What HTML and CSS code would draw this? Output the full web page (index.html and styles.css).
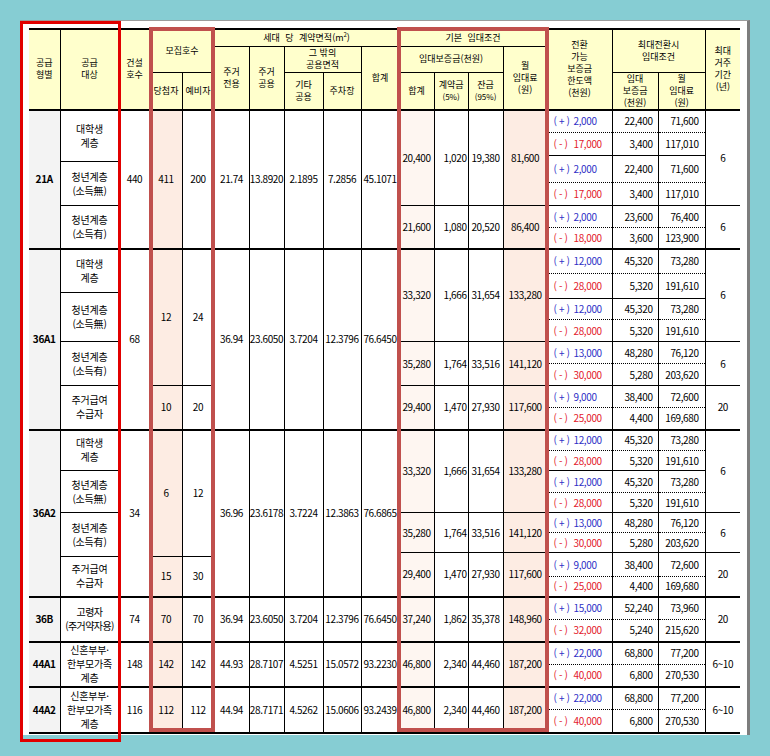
FILE: index.html
```html
<!DOCTYPE html>
<html lang="ko">
<head>
<meta charset="utf-8">
<title>공급 조건표</title>
<link rel="stylesheet" href="styles.css">
</head>
<body>
<div class="page">
  <div class="panel">
    <table class="t">
      <colgroup>
        <col class="c1"><col class="c2"><col class="c3"><col class="c4"><col class="c5">
        <col class="c6"><col class="c7"><col class="c8"><col class="c9"><col class="c10">
        <col class="c11"><col class="c12"><col class="c13"><col class="c14"><col class="c15">
        <col class="c16"><col class="c17"><col class="c18">
      </colgroup>
      <thead>
        <tr class="h17">
          <th rowspan="3">공급<br>형별</th>
          <th rowspan="3">공급<br>대상</th>
          <th rowspan="3">건설<br>호수</th>
          <th rowspan="2" colspan="2">모집호수</th>
          <th colspan="5" class="ws">세대 당 계약면적(m<span class="sup">2</span>)</th>
          <th colspan="4" class="ws">기본 임대조건</th>
          <th rowspan="3">전환<br>가능<br>보증금<br>한도액<br>(천원)</th>
          <th rowspan="2" colspan="2">최대전환시<br>임대조건</th>
          <th rowspan="3" class="last">최대<br>거주<br>기간<br>(년)</th>
        </tr>
        <tr class="h26">
          <th rowspan="2">주거<br>전용</th>
          <th rowspan="2">주거<br>공용</th>
          <th colspan="2">그 밖의<br>공용면적</th>
          <th rowspan="2">합계</th>
          <th colspan="3">임대보증금(천원)</th>
          <th rowspan="2">월<br>임대료<br>(원)</th>
        </tr>
        <tr class="h37">
          <th>당첨자</th>
          <th>예비자</th>
          <th>기타<br>공용</th>
          <th>주차장</th>
          <th>합계</th>
          <th>계약금<br><span class="sm">(5%)</span></th>
          <th>잔금<br><span class="sm">(95%)</span></th>
          <th>임대<br>보증금<br>(천원)</th>
          <th>월<br>임대료<br>(원)</th>
        </tr>
      </thead>
      <tbody>
        <!-- 21A -->
        <tr class="g h23">
          <td rowspan="7" class="l">21A</td>
          <td rowspan="3" class="t2">대학생<br>계층</td>
          <td rowspan="7">440</td>
          <td rowspan="7" class="p1">411</td>
          <td rowspan="7">200</td>
          <td rowspan="7">21.74</td>
          <td rowspan="7">13.8920</td>
          <td rowspan="7">2.1895</td>
          <td rowspan="7">7.2856</td>
          <td rowspan="7">45.1071</td>
          <td rowspan="5" class="p2">20,400</td>
          <td rowspan="5" class="k">1,020</td>
          <td rowspan="5">19,380</td>
          <td rowspan="5" class="p1">81,600</td>
          <td class="cv up d"><span class="s">(+)</span>2,000</td>
          <td class="m1 d">22,400</td>
          <td class="m2 d">71,600</td>
          <td rowspan="5" class="last">6</td>
        </tr>
        <tr class="h23">
          <td class="cv dn"><span class="s">(-)</span>17,000</td>
          <td class="m1">3,400</td>
          <td class="m2">117,010</td>
        </tr>
        <tr class="h6">
          <td rowspan="2" class="cv up d"><span class="s">(+)</span>2,000</td>
          <td rowspan="2" class="m1 d">22,400</td>
          <td rowspan="2" class="m2 d">71,600</td>
        </tr>
        <tr class="h21">
          <td rowspan="2" class="t2">청년계층<br>(소득無)</td>
        </tr>
        <tr class="h23">
          <td class="cv dn"><span class="s">(-)</span>17,000</td>
          <td class="m1">3,400</td>
          <td class="m2">117,010</td>
        </tr>
        <tr class="h22">
          <td rowspan="2" class="t2">청년계층<br>(소득有)</td>
          <td rowspan="2" class="p2">21,600</td>
          <td rowspan="2" class="k">1,080</td>
          <td rowspan="2">20,520</td>
          <td rowspan="2" class="p1">86,400</td>
          <td class="cv up d"><span class="s">(+)</span>2,000</td>
          <td class="m1 d">23,600</td>
          <td class="m2 d">76,400</td>
          <td rowspan="2" class="last">6</td>
        </tr>
        <tr class="h21">
          <td class="cv dn"><span class="s">(-)</span>18,000</td>
          <td class="m1">3,600</td>
          <td class="m2">123,900</td>
        </tr>

        <!-- 36A1 -->
        <tr class="g h25">
          <td rowspan="9" class="l">36A1</td>
          <td rowspan="2" class="t2">대학생<br>계층</td>
          <td rowspan="9">68</td>
          <td rowspan="7" class="p1">12</td>
          <td rowspan="7">24</td>
          <td rowspan="9">36.94</td>
          <td rowspan="9">23.6050</td>
          <td rowspan="9">3.7204</td>
          <td rowspan="9">12.3796</td>
          <td rowspan="9">76.6450</td>
          <td rowspan="5" class="p2">33,320</td>
          <td rowspan="5" class="k">1,666</td>
          <td rowspan="5">31,654</td>
          <td rowspan="5" class="p1">133,280</td>
          <td class="cv up d"><span class="s">(+)</span>12,000</td>
          <td class="m1 d">45,320</td>
          <td class="m2 d">73,280</td>
          <td rowspan="5" class="last">6</td>
        </tr>
        <tr class="h19">
          <td rowspan="2" class="cv dn"><span class="s">(-)</span>28,000</td>
          <td rowspan="2" class="m1">5,320</td>
          <td rowspan="2" class="m2">191,610</td>
        </tr>
        <tr class="h6">
          <td rowspan="3" class="t2">청년계층<br>(소득無)</td>
        </tr>
        <tr class="h21">
          <td class="cv up d"><span class="s">(+)</span>12,000</td>
          <td class="m1 d">45,320</td>
          <td class="m2 d">73,280</td>
        </tr>
        <tr class="h22">
          <td class="cv dn"><span class="s">(-)</span>28,000</td>
          <td class="m1">5,320</td>
          <td class="m2">191,610</td>
        </tr>
        <tr class="h22">
          <td rowspan="2" class="t2">청년계층<br>(소득有)</td>
          <td rowspan="2" class="p2">35,280</td>
          <td rowspan="2" class="k">1,764</td>
          <td rowspan="2">33,516</td>
          <td rowspan="2" class="p1">141,120</td>
          <td class="cv up d"><span class="s">(+)</span>13,000</td>
          <td class="m1 d">48,280</td>
          <td class="m2 d">76,120</td>
          <td rowspan="2" class="last">6</td>
        </tr>
        <tr class="h22">
          <td class="cv dn"><span class="s">(-)</span>30,000</td>
          <td class="m1">5,280</td>
          <td class="m2">203,620</td>
        </tr>
        <tr class="h22">
          <td rowspan="2" class="t2">주거급여<br>수급자</td>
          <td rowspan="2" class="p1">10</td>
          <td rowspan="2">20</td>
          <td rowspan="2" class="p2">29,400</td>
          <td rowspan="2" class="k">1,470</td>
          <td rowspan="2">27,930</td>
          <td rowspan="2" class="p1">117,600</td>
          <td class="cv up d"><span class="s">(+)</span>9,000</td>
          <td class="m1 d">38,400</td>
          <td class="m2 d">72,600</td>
          <td rowspan="2" class="last">20</td>
        </tr>
        <tr class="h22">
          <td class="cv dn"><span class="s">(-)</span>25,000</td>
          <td class="m1">4,400</td>
          <td class="m2">169,680</td>
        </tr>

        <!-- 36A2 -->
        <tr class="g h21">
          <td rowspan="9" class="l">36A2</td>
          <td rowspan="2" class="t2">대학생<br>계층</td>
          <td rowspan="9">34</td>
          <td rowspan="7" class="p1">6</td>
          <td rowspan="7">12</td>
          <td rowspan="9">36.96</td>
          <td rowspan="9">23.6178</td>
          <td rowspan="9">3.7224</td>
          <td rowspan="9">12.3863</td>
          <td rowspan="9">76.6865</td>
          <td rowspan="4" class="p2">33,320</td>
          <td rowspan="4" class="k">1,666</td>
          <td rowspan="4">31,654</td>
          <td rowspan="4" class="p1">133,280</td>
          <td class="cv up d"><span class="s">(+)</span>12,000</td>
          <td class="m1 d">45,320</td>
          <td class="m2 d">73,280</td>
          <td rowspan="4" class="last">6</td>
        </tr>
        <tr class="h20">
          <td class="cv dn"><span class="s">(-)</span>28,000</td>
          <td class="m1">5,320</td>
          <td class="m2">191,610</td>
        </tr>
        <tr class="h22">
          <td rowspan="2" class="t2">청년계층<br>(소득無)</td>
          <td class="cv up d"><span class="s">(+)</span>12,000</td>
          <td class="m1 d">45,320</td>
          <td class="m2 d">73,280</td>
        </tr>
        <tr class="h20">
          <td class="cv dn"><span class="s">(-)</span>28,000</td>
          <td class="m1">5,320</td>
          <td class="m2">191,610</td>
        </tr>
        <tr class="h20">
          <td rowspan="3" class="t2">청년계층<br>(소득有)</td>
          <td rowspan="2" class="p2">35,280</td>
          <td rowspan="2" class="k">1,764</td>
          <td rowspan="2">33,516</td>
          <td rowspan="2" class="p1">141,120</td>
          <td class="cv up d"><span class="s">(+)</span>13,000</td>
          <td class="m1 d">48,280</td>
          <td class="m2 d">76,120</td>
          <td rowspan="2" class="last">6</td>
        </tr>
        <tr class="h20">
          <td class="cv dn"><span class="s">(-)</span>30,000</td>
          <td class="m1">5,280</td>
          <td class="m2">203,620</td>
        </tr>
        <tr class="h4">
          <td rowspan="3" class="p2">29,400</td>
          <td rowspan="3" class="k">1,470</td>
          <td rowspan="3">27,930</td>
          <td rowspan="3" class="p1">117,600</td>
          <td rowspan="2" class="cv up d"><span class="s">(+)</span>9,000</td>
          <td rowspan="2" class="m1 d">38,400</td>
          <td rowspan="2" class="m2 d">72,600</td>
          <td rowspan="3" class="last">20</td>
        </tr>
        <tr class="h20">
          <td rowspan="2" class="t2">주거급여<br>수급자</td>
          <td rowspan="2" class="p1">15</td>
          <td rowspan="2">30</td>
        </tr>
        <tr class="h20">
          <td class="cv dn"><span class="s">(-)</span>25,000</td>
          <td class="m1">4,400</td>
          <td class="m2">169,680</td>
        </tr>

        <!-- 36B -->
        <tr class="g h23">
          <td rowspan="2" class="l">36B</td>
          <td rowspan="2" class="t2 nar">고령자<br>(주거약자용)</td>
          <td rowspan="2">74</td>
          <td rowspan="2" class="p1">70</td>
          <td rowspan="2">70</td>
          <td rowspan="2">36.94</td>
          <td rowspan="2">23.6050</td>
          <td rowspan="2">3.7204</td>
          <td rowspan="2">12.3796</td>
          <td rowspan="2">76.6450</td>
          <td rowspan="2" class="p2">37,240</td>
          <td rowspan="2" class="k">1,862</td>
          <td rowspan="2">35,378</td>
          <td rowspan="2" class="p1">148,960</td>
          <td class="cv up d"><span class="s">(+)</span>15,000</td>
          <td class="m1 d">52,240</td>
          <td class="m2 d">73,960</td>
          <td rowspan="2" class="last">20</td>
        </tr>
        <tr class="h22">
          <td class="cv dn"><span class="s">(-)</span>32,000</td>
          <td class="m1">5,240</td>
          <td class="m2">215,620</td>
        </tr>

        <!-- 44A1 -->
        <tr class="g h23">
          <td rowspan="2" class="l">44A1</td>
          <td rowspan="2" class="t2 tall">신혼부부·<br>한부모가족<br>계층</td>
          <td rowspan="2">148</td>
          <td rowspan="2" class="p1">142</td>
          <td rowspan="2">142</td>
          <td rowspan="2">44.93</td>
          <td rowspan="2">28.7107</td>
          <td rowspan="2">4.5251</td>
          <td rowspan="2">15.0572</td>
          <td rowspan="2">93.2230</td>
          <td rowspan="2" class="p2">46,800</td>
          <td rowspan="2" class="k">2,340</td>
          <td rowspan="2">44,460</td>
          <td rowspan="2" class="p1">187,200</td>
          <td class="cv up d"><span class="s">(+)</span>22,000</td>
          <td class="m1 d">68,800</td>
          <td class="m2 d">77,200</td>
          <td rowspan="2" class="last">6~10</td>
        </tr>
        <tr class="h22">
          <td class="cv dn"><span class="s">(-)</span>40,000</td>
          <td class="m1">6,800</td>
          <td class="m2">270,530</td>
        </tr>

        <!-- 44A2 -->
        <tr class="g h23">
          <td rowspan="2" class="l">44A2</td>
          <td rowspan="2" class="t2 tall">신혼부부·<br>한부모가족<br>계층</td>
          <td rowspan="2">116</td>
          <td rowspan="2" class="p1">112</td>
          <td rowspan="2">112</td>
          <td rowspan="2">44.94</td>
          <td rowspan="2">28.7171</td>
          <td rowspan="2">4.5262</td>
          <td rowspan="2">15.0606</td>
          <td rowspan="2">93.2439</td>
          <td rowspan="2" class="p2">46,800</td>
          <td rowspan="2" class="k">2,340</td>
          <td rowspan="2">44,460</td>
          <td rowspan="2" class="p1">187,200</td>
          <td class="cv up d"><span class="s">(+)</span>22,000</td>
          <td class="m1 d">68,800</td>
          <td class="m2 d">77,200</td>
          <td rowspan="2" class="last">6~10</td>
        </tr>
        <tr class="h23">
          <td class="cv dn"><span class="s">(-)</span>40,000</td>
          <td class="m1">6,800</td>
          <td class="m2">270,530</td>
        </tr>
      </tbody>
    </table>
  </div>

  <div class="mark red"></div>
  <div class="mark brown b1"></div>
  <div class="mark brown b2"></div>
</div>
</body>
</html>
```

FILE: styles.css
```css
html, body {
  margin: 0;
  padding: 0;
}
body {
  background: #86cdd3;
  font-family: "Noto Sans CJK KR", "Noto Sans", sans-serif;
  color: #000;
}
.page {
  position: relative;
  width: 770px;
  height: 756px;
  overflow: hidden;
  padding: 20px 0 0 20px;
  box-sizing: border-box;
}
.panel {
  width: 730px;
  height: 715px;
  box-sizing: border-box;
  background: #fff;
  border-top: 1px solid #9c9c9c;
  border-right: 3px solid #7d7d7d;
  padding: 7px 0 0 9px;
}

/* table */
.t {
  border-collapse: collapse;
  table-layout: fixed;
  width: 711px;
  font-size: 10px;
  line-height: 12px;
  border-top: 2px solid #000;
  border-bottom: 2px solid #000;
}
.c1 { width: 31px; }
.c2 { width: 59px; }
.c3 { width: 31px; }
.c4 { width: 32px; }
.c5 { width: 32px; }
.c6 { width: 35px; }
.c7 { width: 35px; }
.c8 { width: 39px; }
.c9 { width: 38px; }
.c10 { width: 38px; }
.c11 { width: 35px; }
.c12 { width: 34px; }
.c13 { width: 35px; }
.c14 { width: 44px; }
.c15 { width: 65px; }
.c16 { width: 46px; }
.c17 { width: 47px; }
.c18 { width: 35px; }

.t th, .t td {
  padding: 0;
  border: 0;
  border-right: 1px solid #000;
  border-bottom: 1px solid #000;
  text-align: center;
  vertical-align: middle;
  white-space: nowrap;
  overflow: hidden;
}
.t th {
  background: #ffffcc;
  font-weight: normal;
  font-size: 9px;
  line-height: 12px;
}
.t td {
  letter-spacing: -0.4px;
}
.t .last { border-right: 0; }
.t tr.g td { border-top: 2px solid #000; }
.t .d { border-bottom: 1px dotted #000; }

.ws { word-spacing: 3px; }
.sup { font-size: 6px; vertical-align: 4px; line-height: 0; }
.sm { font-size: 8px; }

.h4 { height: 4px; }
.h6 { height: 6px; }
.h17 { height: 17px; }
.h19 { height: 19px; }
.h20 { height: 20px; }
.h21 { height: 21px; }
.h22 { height: 22px; }
.h23 { height: 23px; }
.h25 { height: 25px; }
.h26 { height: 26px; }
.h37 { height: 37px; }

/* body cell kinds */
.t .l {
  background: #f3f3f3;
  font-weight: bold;
  letter-spacing: -0.3px;
}
.t .t2 { letter-spacing: -0.2px; line-height: 14px; }
.t .nar { letter-spacing: -0.6px; }
.t .tall { line-height: 14px; }
.t .p1 { background: #fdece3; }
.t .p2 { background: #fef6f1; }
.t .k { text-align: right; padding-right: 1px; }
.t .cv { text-align: left; padding-left: 6px; }
.t .m1 { text-align: right; padding-right: 5px; }
.t .m2 { text-align: right; padding-right: 6px; }
.up { color: #2f2fc6; }
.dn { color: #e3202b; }
.s {
  display: inline-block;
  width: 20px;
  letter-spacing: 2px;
}

/* annotation boxes drawn over the table */
.mark {
  position: absolute;
  box-sizing: border-box;
  pointer-events: none;
}
.red {
  left: 20px;
  top: 21px;
  width: 101px;
  height: 721px;
  border: 3px solid #e10000;
}
.brown {
  top: 27px;
  height: 705px;
  border: 4px solid #c0504d;
}
.b1 { left: 149px; width: 66px; }
.b2 { left: 397px; width: 152px; }
```
